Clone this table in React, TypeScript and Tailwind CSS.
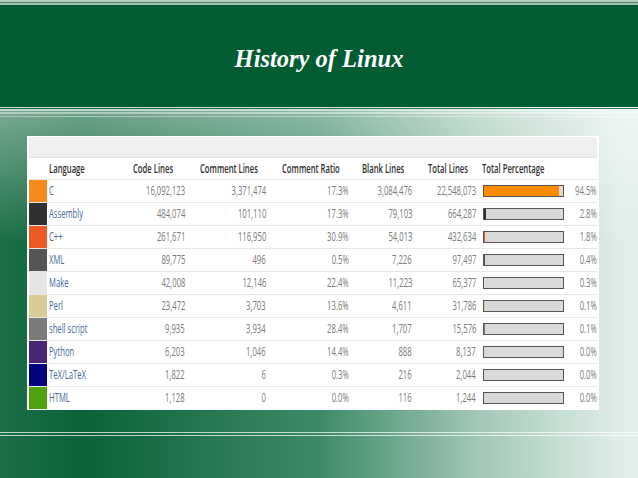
const rows = [
  { lang: "C", swatch: "bg-[#f68a1e]", fill: "bg-[#fb8c00]", code: "16,092,123", comment: "3,371,474", ratio: "17.3%", blank: "3,084,476", total: "22,548,073", pct: 94.5 },
  { lang: "Assembly", swatch: "bg-[#303030]", fill: "bg-[#303030]", code: "484,074", comment: "101,110", ratio: "17.3%", blank: "79,103", total: "664,287", pct: 2.8 },
  { lang: "C++", swatch: "bg-[#ee5a24]", fill: "bg-[#ee5a24]", code: "261,671", comment: "116,950", ratio: "30.9%", blank: "54,013", total: "432,634", pct: 1.8 },
  { lang: "XML", swatch: "bg-[#555555]", fill: "bg-[#555555]", code: "89,775", comment: "496", ratio: "0.5%", blank: "7,226", total: "97,497", pct: 0.4 },
  { lang: "Make", swatch: "bg-[#e6e6e6]", fill: "bg-[#e6e6e6]", code: "42,008", comment: "12,146", ratio: "22.4%", blank: "11,223", total: "65,377", pct: 0.3 },
  { lang: "Perl", swatch: "bg-[#d8cb94]", fill: "bg-[#d8cb94]", code: "23,472", comment: "3,703", ratio: "13.6%", blank: "4,611", total: "31,786", pct: 0.1 },
  { lang: "shell script", swatch: "bg-[#7b7b7b]", fill: "bg-[#7b7b7b]", code: "9,935", comment: "3,934", ratio: "28.4%", blank: "1,707", total: "15,576", pct: 0.1 },
  { lang: "Python", swatch: "bg-[#4a2574]", fill: "bg-[#4a2574]", code: "6,203", comment: "1,046", ratio: "14.4%", blank: "888", total: "8,137", pct: 0.0 },
  { lang: "TeX/LaTeX", swatch: "bg-[#02027e]", fill: "bg-[#02027e]", code: "1,822", comment: "6", ratio: "0.3%", blank: "216", total: "2,044", pct: 0.0 },
  { lang: "HTML", swatch: "bg-[#4fa30f]", fill: "bg-[#4fa30f]", code: "1,128", comment: "0", ratio: "0.0%", blank: "116", total: "1,244", pct: 0.0 },
];

const GRID = "grid grid-cols-[18px_78px_67px_82px_82px_64px_60px_86px_31px]";

// text in the shot is squeezed sideways, so each cell is narrowed with scale-x
function Right({ children, pr }: { children: React.ReactNode; pr: string }) {
  return (
    <div className={`flex items-center justify-end ${pr}`}>
      <span className="origin-right scale-x-[.64] whitespace-nowrap">{children}</span>
    </div>
  );
}

function Head({ children, pl }: { children: React.ReactNode; pl: string }) {
  return (
    <div className={`flex items-center ${pl}`}>
      <span className="origin-left scale-x-[.64] whitespace-nowrap">{children}</span>
    </div>
  );
}

export default function App() {
  return (
    <div className="w-[638px] h-[478px] overflow-hidden flex flex-col font-['Open_Sans',sans-serif]">
      {/* Title band */}
      <div className="flex flex-col h-[107px] bg-[#015c31]">
        <div className="h-[2px] bg-[#b6cabd]" />
        <div className="h-[1px] bg-[#4f8466]" />
        <div className="h-[2px] bg-[#a7c1b2]" />
        <div className="flex justify-center pt-[40px]">
          <h1 className="font-['Liberation_Serif',serif] italic font-bold text-[24.5px] leading-[28px] text-white">
            History of Linux
          </h1>
        </div>
      </div>

      {/* Body with gradient */}
      <div className="flex-1 flex flex-col bg-[linear-gradient(to_bottom,#ffffff6b,#ffffff00_36%),linear-gradient(to_right,#1d7048_0%,#0a6238_13%,#3d8a68_50%,#a2c8b6_75%,#e0eee8_97%)]">
        {/* stripes under the band */}
        <div className="flex flex-col">
          <div className="h-[1px] bg-white/60" />
          <div className="h-[1px] bg-[#015c31]/80" />
          <div className="h-[2px] bg-white/55" />
          <div className="h-[1px]" />
          <div className="h-[2px] bg-white/45" />
          <div className="h-[2px]" />
          <div className="h-[1px] bg-white/40" />
          <div className="h-[3px]" />
        </div>

        {/* Table card */}
        <div className="mt-[16px] ml-[27px] w-[572px] bg-white px-[2px] py-[1px] text-[12px]">
          <div className="h-[20px] bg-[#efefef] rounded-tr-[4px]" />
          <div className={`${GRID} h-[22px] border-t border-[#e3e3e3] text-[#2e2e2e] font-semibold`}>
            <div />
            <Head pl="pl-[2px]">Language</Head>
            <Head pl="pl-[8px]">Code Lines</Head>
            <Head pl="pl-[8px]">Comment Lines</Head>
            <Head pl="pl-[8px]">Comment Ratio</Head>
            <Head pl="pl-[6px]">Blank Lines</Head>
            <Head pl="pl-[8px]">Total Lines</Head>
            <Head pl="pl-[2px]">Total Percentage</Head>
            <div />
          </div>

          {rows.map((r) => (
            <div key={r.lang} className={`${GRID} h-[23px] border-t border-[#e6e6e6] text-[#7a7a7a]`}>
              <div className={r.swatch} />
              <Head pl="pl-[2px]">
                <span className="text-[#46689a]">{r.lang}</span>
              </Head>
              <Right pr="pr-[7px]">{r.code}</Right>
              <Right pr="pr-[8px]">{r.comment}</Right>
              <Right pr="pr-[7px]">{r.ratio}</Right>
              <Right pr="pr-[8px]">{r.blank}</Right>
              <Right pr="pr-[4px]">{r.total}</Right>
              <div className="flex items-center pl-[3px]">
                <div className="flex w-[81px] h-[12px] border border-[#555555] bg-[#d9d9d9]">
                  <div className={r.fill} style={{ width: `${r.pct}%` }} />
                </div>
              </div>
              <Right pr="pr-0">{r.pct.toFixed(1)}%</Right>
            </div>
          ))}
        </div>

        {/* bottom rules */}
        <div className="mt-[22px] flex flex-col">
          <div className="h-[1px] bg-white/70" />
          <div className="h-[2px]" />
          <div className="h-[1px] bg-white/70" />
        </div>
      </div>
    </div>
  );
}
